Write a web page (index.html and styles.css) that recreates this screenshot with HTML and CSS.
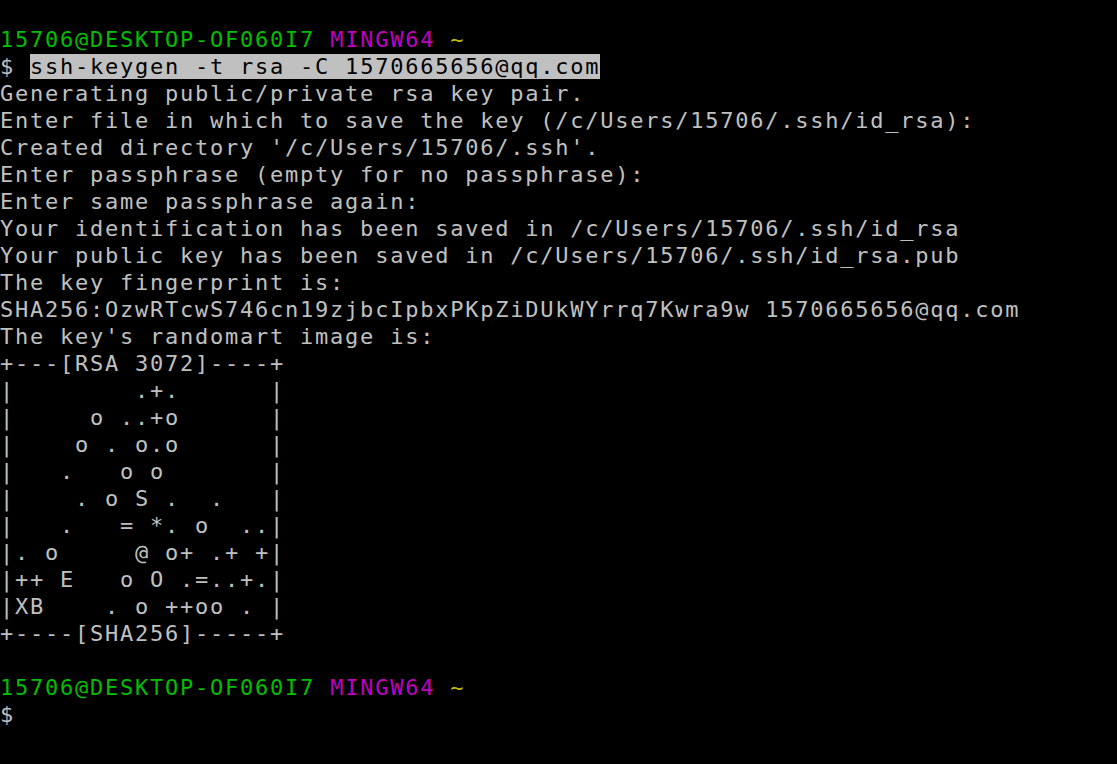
FILE: index.html
```html
<!DOCTYPE html>
<html>
<head>
<meta charset="utf-8">
<title>MINGW64</title>
<link rel="stylesheet" href="styles.css">
</head>
<body>
<pre class="term"><span class="g">15706@DESKTOP-OF060I7</span> <span class="m">MINGW64</span> <span class="y">~</span>
$ <span class="sel">ssh-keygen -t rsa -C 1570665656@qq.com</span>
Generating public/private rsa key pair.
Enter file in which to save the key (/c/Users/15706/.ssh/id_rsa):
Created directory '/c/Users/15706/.ssh'.
Enter passphrase (empty for no passphrase):
Enter same passphrase again:
Your identification has been saved in /c/Users/15706/.ssh/id_rsa
Your public key has been saved in /c/Users/15706/.ssh/id_rsa.pub
The key fingerprint is:
SHA256:OzwRTcwS746cn19zjbcIpbxPKpZiDUkWYrrq7Kwra9w 1570665656@qq.com
The key's randomart image is:
+---[RSA 3072]----+
|        .+.      |
|     o ..+o      |
|    o . o.o      |
|   .   o o       |
|    . o S .  .   |
|   .   = *. o  ..|
|. o     @ o+ .+ +|
|++ E   o O .=..+.|
|XB    . o ++oo . |
+----[SHA256]-----+

<span class="g">15706@DESKTOP-OF060I7</span> <span class="m">MINGW64</span> <span class="y">~</span>
$
</pre>
</body>
</html>
```
FILE: styles.css
```css
html, body {
  margin: 0;
  padding: 0;
  background: #000000;
  height: 100%;
}
.term {
  margin: 0;
  padding: 26px 0 0 0;
  font-family: "DejaVu Sans Mono", "Liberation Mono", monospace;
  font-size: 22px;
  letter-spacing: 1.76px;
  line-height: 27px;
  color: #c0c0c0;
  white-space: pre;
}
.g { color: #00bf00; }
.m { color: #bf00bf; }
.y { color: #bfbf00; }
.sel {
  background: #c0c0c0;
  color: #000000;
}
```
